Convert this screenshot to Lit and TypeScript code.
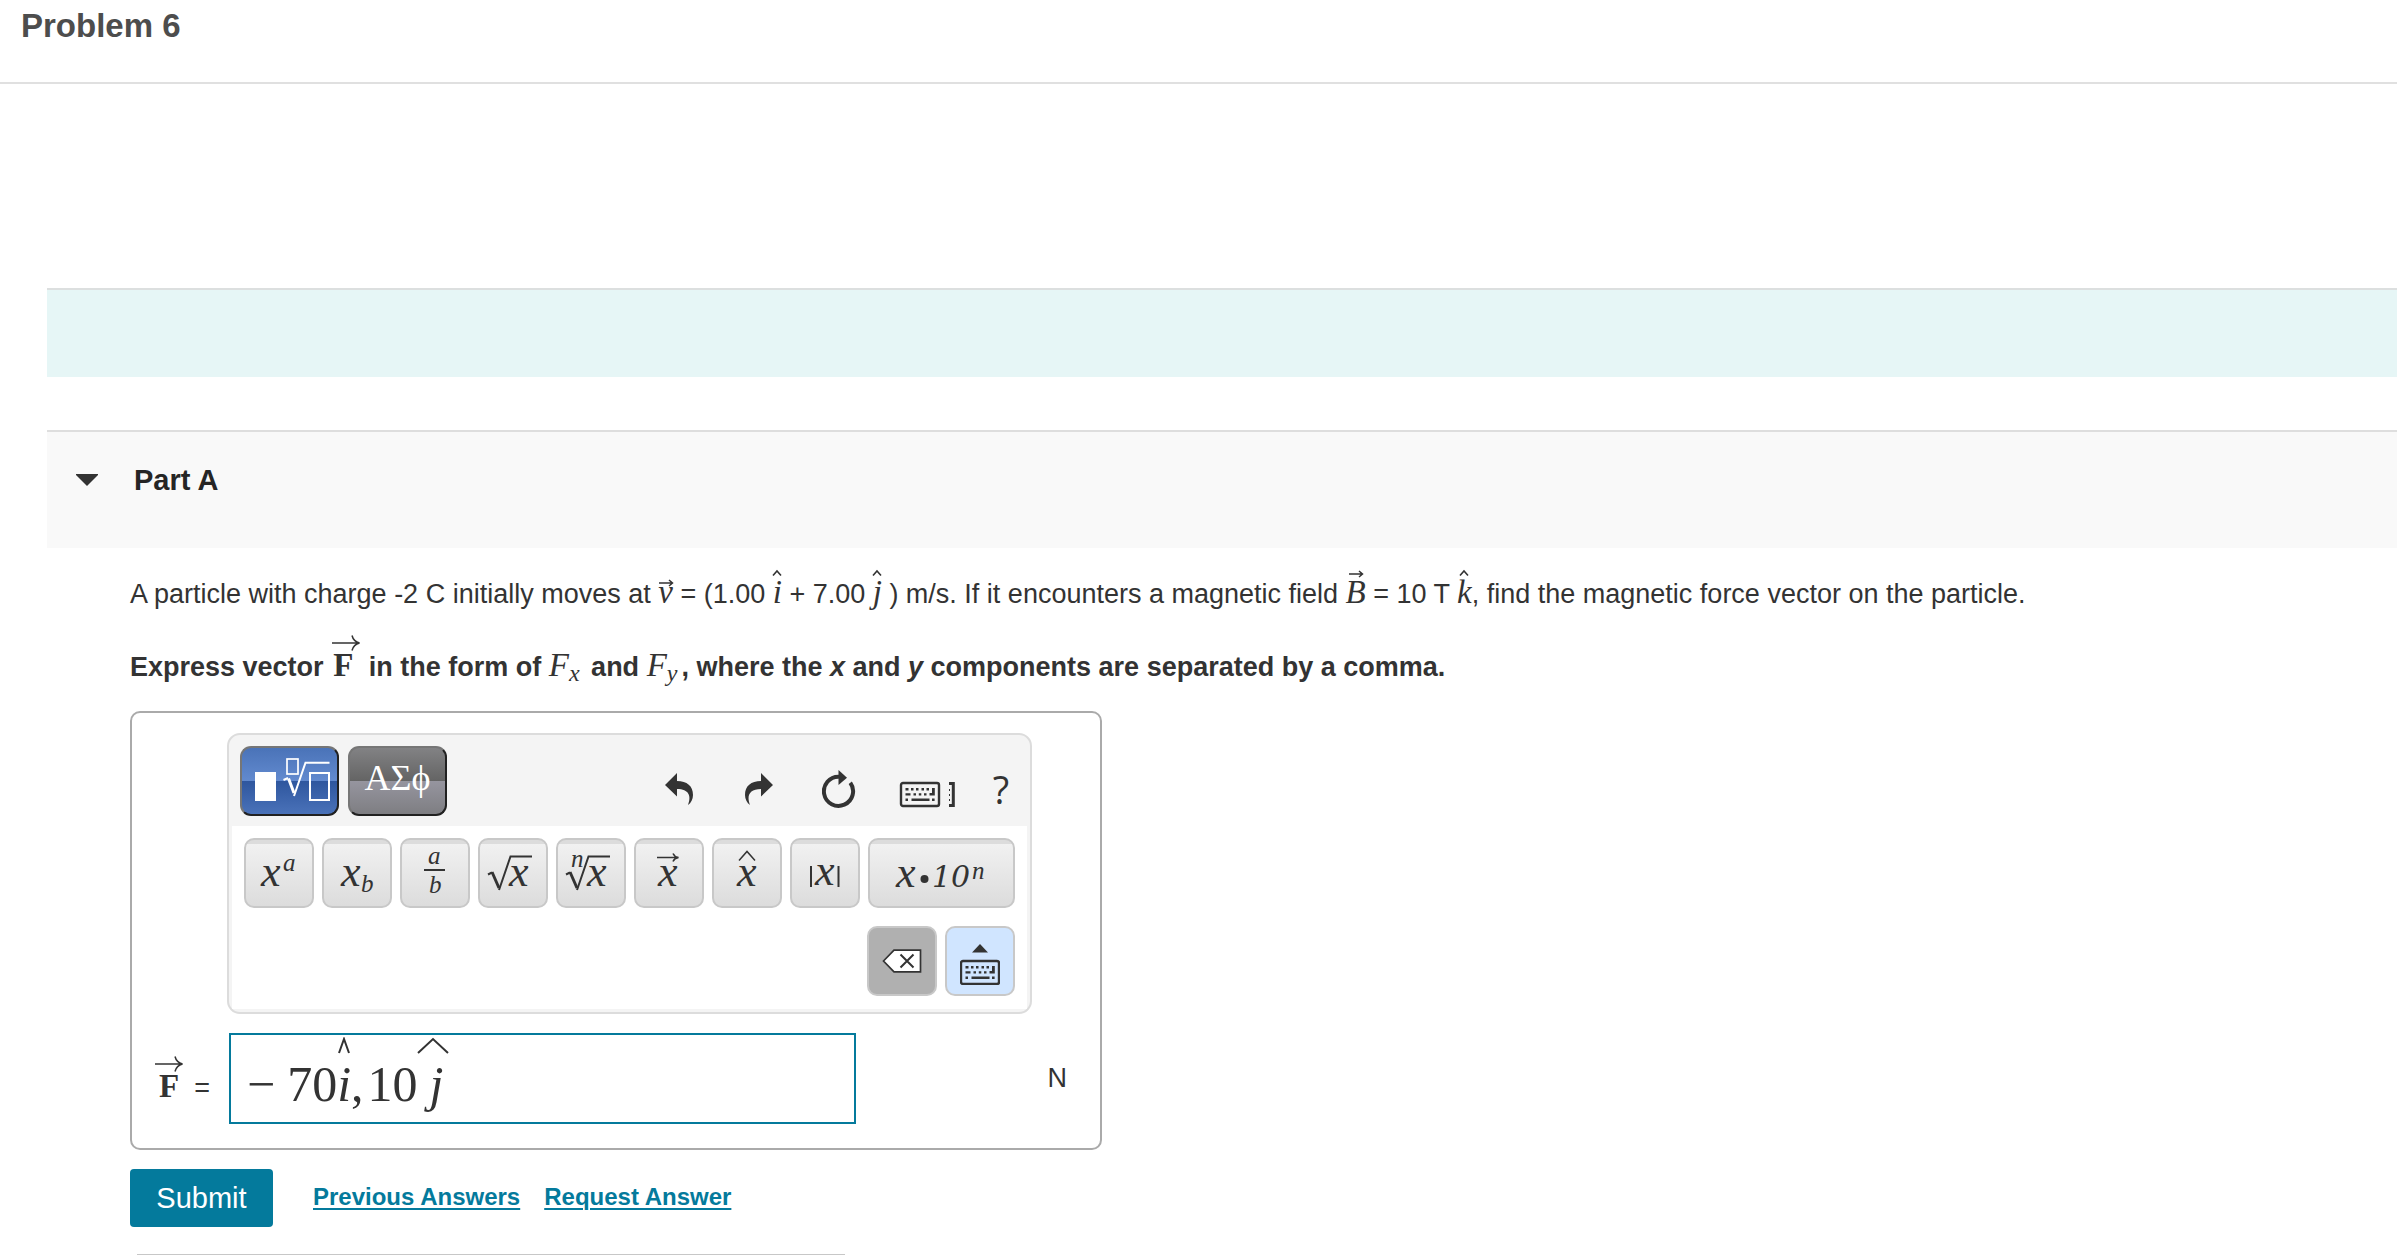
import { LitElement, html, svg, css, nothing } from "lit";
import { customElement, property } from "lit/decorators.js";

type Accent = "arrow" | "long-arrow" | "hat" | "wide-hat";

/** A math symbol with an optional accent above it and an optional subscript. */
@customElement("math-symbol")
export class MathSymbol extends LitElement {
  static styles = css`
    :host {
      position: relative;
      display: inline-block;
      line-height: 1;
      font-family: "Liberation Serif", "Times New Roman", serif;
      font-weight: 400;
      font-style: italic;
    }
    :host([upright]) {
      font-style: normal;
      font-weight: 700;
    }
    .sub {
      font-size: 24px;
      line-height: 0;
      vertical-align: -5px;
    }
    .accent {
      position: absolute;
      left: 50%;
      bottom: 100%;
      transform: translateX(-50%);
      fill: none;
      stroke: currentColor;
    }
    .arrow { margin-bottom: -2px; }
    .low { margin-bottom: -11px; }
    .hat { margin-bottom: -1px; }
    .long-arrow { margin-bottom: -3px; }
    .wide-hat { margin-bottom: 4px; }
  `;

  @property() accent?: Accent;
  @property() sub = "";
  @property({ type: Boolean }) low = false;
  @property({ type: Number }) span = 32;

  private mark() {
    const w = this.span;
    switch (this.accent) {
      case "arrow":
        return html`<svg class="accent ${this.low ? "low" : "arrow"}" width="16" height="8" viewBox="0 0 16 8" stroke-width="1.500"><path d="M1 4H14M11 1L14.500 4L11 7" /></svg>`;
      case "long-arrow":
        return html`<svg class="accent long-arrow" width="30" height="18" viewBox="0 0 30 18" stroke-width="1.500"><path d="M1 9H28M21 1.500C22 5.500 24.500 8 28.500 9C24.500 10 22 12.500 21 16.500" /></svg>`;
      case "hat":
        return html`<svg class="accent hat" width="12" height="8" viewBox="0 0 12 8" stroke-width="1.600"><path d="M2 6.500L6 2L10 6.500" /></svg>`;
      case "wide-hat":
        return html`<svg class="accent wide-hat" width=${w} height="18" viewBox="0 0 ${w} 18" stroke-width="2"><path d="M1 16L${w / 2} 2L${w - 1} 16" /></svg>`;
      default:
        return nothing;
    }
  }

  render() {
    return html`<slot></slot>${this.sub ? html`<span class="sub">${this.sub}</span>` : nothing}${this.mark()}`;
  }
}

const radical = svg`<path class="line" stroke-width="2" d="M8 34.500L12 32.500" /><path class="line" stroke-width="3" d="M12 32L19 48" /><path class="line" stroke-width="2" d="M19 50L30.500 16.500H52" />`;

const keys = svg`
  <rect class="line" x="1" y="1" width="38" height="23" rx="2" stroke-width="2.400" />
  <path d="M5.500 6h3v2.500h-3zM11 6h2.500v2.500H11zM16 6h2.500v2.500H16zM21.500 6H24v2.500h-2.500zM26.500 6H29v2.500h-2.500zM32 6h2.800v7.500h-5.300v-2.500H32z" />
  <path d="M5.500 11.200h5v2.400h-5zM13.500 11.200H16v2.400h-2.500zM18.800 11.200h2.500v2.400h-2.500zM24 11.200h2.500v2.400H24z" />
  <path d="M5.500 16.500H8v2.400H5.500zM11.500 16.500h18v2.400h-18zM32 16.500h2.600v2.400H32z" />`;

const templates = [
  { name: "Superscript", art: svg`<text x="15" y="46" class="big">x</text><text x="37" y="31" class="small">a</text>` },
  { name: "Subscript", art: svg`<text x="17" y="46" class="big">x</text><text x="37" y="52" class="small">b</text>` },
  { name: "Fraction", art: svg`<text x="26" y="24" class="small">a</text><path class="line" stroke-width="2" d="M22 30H43" /><text x="27" y="53" class="small">b</text>` },
  { name: "Square root", art: svg`${radical}<text x="29" y="46" class="big">x</text>` },
  { name: "Nth root", art: svg`${radical}<text x="13" y="27" class="small">n</text><text x="29" y="46" class="big">x</text>` },
  { name: "Vector", art: svg`<path class="line" stroke-width="1.500" d="M21 17.500H42M37 13.500C38 16 40 17 42.500 17.500C40 18 38 19 37 21.500" /><text x="22" y="46" class="big">x</text>` },
  { name: "Unit vector", art: svg`<path class="line" stroke-width="1.500" d="M25 20.500L33 11.500L41 20.500" /><text x="23" y="46" class="big">x</text>` },
  { name: "Absolute value", art: svg`<path class="line" stroke-width="2" d="M19 26V47M46.500 26V47" /><text x="23" y="45" class="big">x</text>` },
];

@customElement("app-root")
export class AppRoot extends LitElement {
  static styles = css`
    :host {
      display: block;
      background: #fff;
      color: #333;
      font-family: "Liberation Sans", Arial, sans-serif;
      font-size: 27px;
    }
    * { box-sizing: border-box; }
    h1, h2, p { margin: 0; }
    button { font: inherit; color: inherit; padding: 0; cursor: pointer; }
    svg { display: block; }

    .title {
      padding: 7px 21px 37px;
      border-bottom: 2px solid #e0e0e0;
      color: #4d4d4d;
      font-size: 33px;
      line-height: 38px;
    }
    .content { padding: 204px 0 0 47px; }
    .notice {
      height: 89px;
      border-top: 2px solid #dcdfdf;
      background: #e6f6f6;
    }
    .part {
      display: flex;
      align-items: flex-start;
      margin-top: 53px;
      padding: 31px 29px 51px;
      border-top: 2px solid #dedede;
      background: #f9f9f9;
    }
    .toggle {
      display: flex;
      align-items: center;
      gap: 36px;
      border: 0;
      background: none;
      color: #252525;
      font-size: 29px;
      font-weight: 700;
      line-height: 34px;
    }
    .body { padding: 10px 83px 0; }
    .text { line-height: 73px; }
    .strong { font-weight: 700; }
    .text math-symbol { font-size: 33px; }
    .text .force { padding: 0 8px 0 2px; }
    .text .component { padding-right: 4px; }

    .answer {
      max-width: 972px;
      margin-top: 7px;
      padding: 20px 33px 24px 0;
      border: 2px solid #aaa;
      border-radius: 10px;
    }
    .palette {
      width: fit-content;
      margin-left: 95px;
      padding: 0 3px 3px;
      border: 2px solid #dcdcdc;
      border-radius: 13px;
      background: #f4f4f4;
    }
    .bar {
      display: flex;
      align-items: flex-start;
      gap: 9px;
      height: 91px;
      padding: 11px 0 0 8px;
    }
    .mode {
      width: 99px;
      height: 70px;
      border: 2px solid;
      border-color: #767676 #212121 #212121 #767676;
      border-radius: 11px;
      color: #fff;
      font-family: "Liberation Serif", serif;
      font-size: 36px;
      line-height: 60px;
    }
    .mode svg { fill: #fff; }
    .mode .line { stroke: #fff; }
    .math { background: linear-gradient(#4a73b8, #628acf 50%, #2e569e 50%, #4a72b9); }
    .greek {
      padding-bottom: 6px;
      background: linear-gradient(#828284, #646464 50%, #96959f 50%, #7e7e82);
    }
    .tools {
      display: flex;
      align-items: center;
      height: 86px;
      margin-left: auto;
    }
    .tool {
      display: grid;
      place-items: center;
      width: 80px;
      height: 40px;
      border: 0;
      background: none;
      font-family: "Open Sans", sans-serif;
      font-size: 38px;
      line-height: 40px;
    }
    .help { width: 68px; padding-left: 16px; }
    svg { fill: #333; }
    .line { fill: none; stroke: #333; }
    .big { font: italic 44px "Liberation Serif", serif; }
    .small { font: italic 25px "Liberation Serif", serif; }
    .digits { font: italic 30px "DejaVu Serif", serif; }

    .sheet {
      display: flex;
      flex-direction: column;
      gap: 18px;
      padding: 12px;
      background: #fff;
    }
    .row { display: flex; gap: 8px; }
    .end { justify-content: flex-end; padding-bottom: 1px; }
    .key {
      width: 70px;
      height: 70px;
      border: 2px solid #c8c8c8;
      border-radius: 10px;
      background: linear-gradient(#dcdcdc 4px, #f1f1f1 4px, #dcdcdc);
    }
    .wide { width: 147px; }
    .erase, .keyboard { display: grid; place-items: center; }
    .erase { background: #b0b0b0; }
    .keyboard { background: #d0e5ff; }

    .entry {
      display: flex;
      align-items: center;
      margin-top: 19px;
    }
    .label {
      display: flex;
      align-items: baseline;
      gap: 15px;
      width: 97px;
      padding: 17px 0 0 27px;
    }
    .label math-symbol { font-size: 33px; }
    .box { display: grid; width: 627px; }
    .input, .formula { grid-area: 1 / 1; }
    .input {
      width: 100%;
      height: 91px;
      margin: 0;
      border: 2px solid #047a9c;
      background: #fff;
      font: 50px "Liberation Serif", serif;
      outline: none;
    }
    .formula {
      display: flex;
      align-items: baseline;
      align-self: center;
      padding: 10px 0 0 18px;
      font: 50px/56px "Liberation Serif", serif;
      pointer-events: none;
    }
    .number { padding-left: 12px; }
    .next { padding-left: 4px; }
    .wide-symbol { padding: 0 4px 0 12px; }
    .units { margin-left: auto; }

    .actions {
      display: flex;
      align-items: center;
      gap: 24px;
      margin-top: 19px;
    }
    .submit {
      width: 143px;
      height: 58px;
      margin-right: 16px;
      border: 0;
      border-radius: 4px;
      background: #047a9c;
      color: #fff;
      font-size: 29px;
    }
    .link {
      padding-bottom: 2px;
      color: #047a9c;
      font-size: 24px;
      font-weight: 700;
      text-decoration-thickness: 2px;
      text-underline-offset: 3px;
    }
    .hint {
      max-width: 708px;
      margin: 27px 7px 0;
      border-top: 1px solid #c7c7c7;
    }
  `;

  private renderPalette() {
    return html`
      <div class="palette">
        <div class="bar">
          <button class="mode math" aria-label="Math templates">
            <svg width="95" height="66" viewBox="0 0 95 66">
              <rect x="13" y="24" width="21" height="29" />
              <rect class="line" x="45" y="11" width="11" height="15" stroke-width="1.700" />
              <path class="line" stroke-width="2" d="M41.500 32L46 30" />
              <path class="line" stroke-width="3" d="M46.500 30.500L52 45" />
              <path class="line" stroke-width="2" d="M52 48L63.500 14.700H87.500" />
              <rect class="line" x="68" y="25" width="19" height="27" stroke-width="2" />
            </svg>
          </button>
          <button class="mode greek">ΑΣϕ</button>
          <div class="tools">
            <button class="tool" aria-label="Undo">
              <svg width="28" height="32" viewBox="0 0 28 32"><path d="M0 12L12 0V8C22 8 28 13 28 22C28 26 26 30 23 32C26.500 23 24 16 12 16V23.500Z" /></svg>
            </button>
            <button class="tool" aria-label="Redo">
              <svg width="28" height="32" viewBox="0 0 28 32"><path d="M28 12L16 0V8C6 8 0 13 0 22C0 26 2 30 5 32C1.500 23 4 16 16 16V23.500Z" /></svg>
            </button>
            <button class="tool" aria-label="Reset">
              <svg width="34" height="38" viewBox="0 0 34 38"><path class="line" stroke-width="4" d="M28.300 12.700A14.600 14.600 0 1 1 17 6.700" /><path d="M16.500 0L25 7.700L16.500 15Z" /></svg>
            </button>
            <button class="tool" aria-label="Keyboard shortcuts">
              <svg width="71" height="37" viewBox="0 0 71 37"><g transform="translate(16 11)">${keys}<path class="line" stroke-width="3" d="M49 1.500H53.300V23.500H49" /><path d="M49 7h1v2h-1zM49 12h1v2h-1zM49 17h1v2h-1z" /></g></svg>
            </button>
            <button class="tool help">?</button>
          </div>
        </div>
        <div class="sheet">
          <div class="row">
            ${templates.map(
              (t) => html`<button class="key" aria-label=${t.name}><svg width="66" height="66" viewBox="0 0 66 66">${t.art}</svg></button>`
            )}
            <button class="key wide" aria-label="Scientific notation">
              <svg width="143" height="66" viewBox="0 0 143 66"><text x="26" y="47" class="big">x</text><circle cx="54.500" cy="39" r="4" /><text x="62" y="47" class="digits">10</text><text x="102" y="39" class="small">n</text></svg>
            </button>
          </div>
          <div class="row end">
            <button class="key erase" aria-label="Delete">
              <svg width="40" height="24" viewBox="0 0 40 24"><path fill="#fff" stroke="#333" stroke-width="1.700" d="M1.500 12L12 1.200H38.500V22.800H12Z" /><path class="line" stroke-width="2" d="M18.500 5.500L31.500 18.500M31.500 5.500L18.500 18.500" /></svg>
            </button>
            <button class="key keyboard" aria-label="Toggle keyboard">
              <svg width="40" height="48" viewBox="0 0 40 48"><path d="M12 15.500L20 7L28 15.500Z" /><g transform="translate(0 23)">${keys}</g></svg>
            </button>
          </div>
        </div>
      </div>
    `;
  }

  render() {
    return html`
      <header><h1 class="title">Problem 6</h1></header>
      <main class="content">
        <div class="notice"></div>
        <h2 class="part">
          <button class="toggle" aria-expanded="true">
            <svg width="22" height="12" viewBox="0 0 22 12"><path d="M0 0H22V1L11 12L0 1Z" /></svg>
            Part A
          </button>
        </h2>
        <section class="body">
          <p class="text">A particle with charge -2 C initially moves at <math-symbol accent="arrow" low>v</math-symbol> = (1.00 <math-symbol accent="hat">i</math-symbol> + 7.00 <math-symbol accent="hat">j</math-symbol> ) m/s. If it encounters a magnetic field <math-symbol accent="arrow">B</math-symbol> = 10 T <math-symbol accent="hat">k</math-symbol>, find the magnetic force vector on the particle.</p>
          <p class="text strong">Express vector <math-symbol class="force" upright accent="long-arrow">F</math-symbol> in the form of <math-symbol class="component" sub="x">F</math-symbol> and <math-symbol class="component" sub="y">F</math-symbol>, where the <em>x</em> and <em>y</em> components are separated by a comma.</p>
          <div class="answer">
            ${this.renderPalette()}
            <div class="entry">
              <label class="label" for="answer"><math-symbol upright accent="long-arrow">F</math-symbol><span>=</span></label>
              <div class="box">
                <input class="input" id="answer" type="text" />
                <div class="formula">
                  <span>−</span><span class="number">70</span><math-symbol accent="wide-hat" .span=${12}>i</math-symbol><span>,</span><span class="next">10</span><math-symbol class="wide-symbol" accent="wide-hat">j</math-symbol>
                </div>
              </div>
              <span class="units">N</span>
            </div>
          </div>
          <div class="actions">
            <button class="submit">Submit</button>
            <a class="link" href="#previous">Previous Answers</a>
            <a class="link" href="#request">Request Answer</a>
          </div>
          <div class="hint"></div>
        </section>
      </main>
    `;
  }
}
